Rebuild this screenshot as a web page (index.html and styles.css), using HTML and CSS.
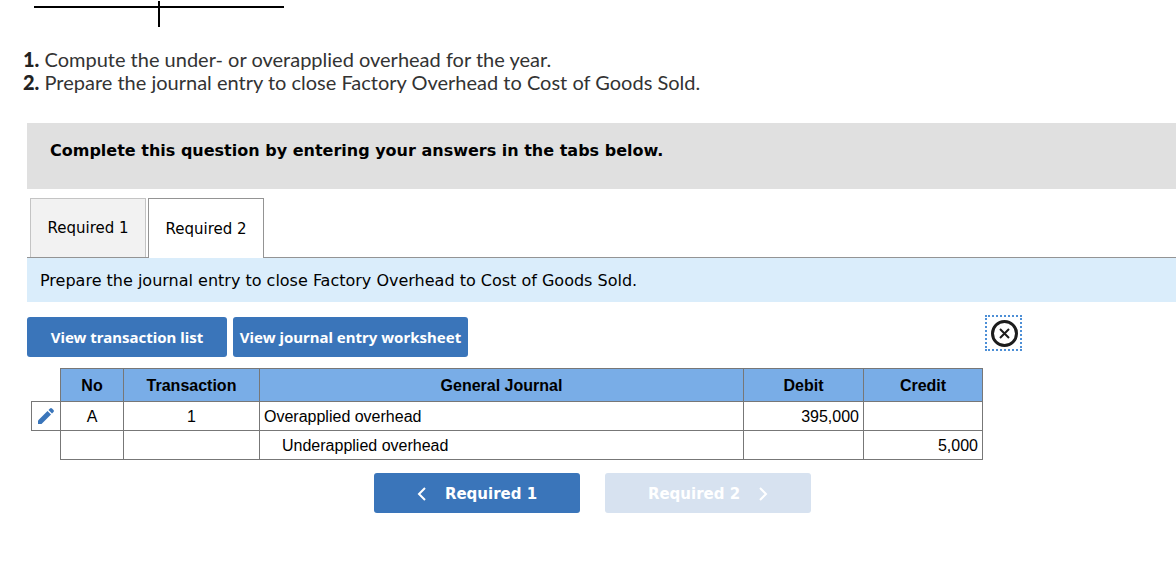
FILE: index.html
```html
<!DOCTYPE html>
<html lang="en">
<head>
  <meta charset="UTF-8">
  <meta name="viewport" content="width=device-width, initial-scale=1.0">
  <title>Factory Overhead</title>
  <link rel="stylesheet" href="styles.css">
</head>
<body>
  <svg class="t-account" width="250" height="26" viewBox="0 0 250 26" aria-hidden="true">
    <path d="M0 6H250M125 0V26" stroke="#000" stroke-width="2"/>
  </svg>

  <div class="question">
    <div><b>1.</b> Compute the under- or overapplied overhead for the year.</div>
    <div><b>2.</b> Prepare the journal entry to close Factory Overhead to Cost of Goods Sold.</div>
  </div>

  <main class="answer">
    <div class="banner">Complete this question by entering your answers in the tabs below.</div>

    <div class="tabs" role="tablist">
      <button class="tab" type="button" role="tab" aria-selected="false">Required 1</button>
      <button class="tab active" type="button" role="tab" aria-selected="true">Required 2</button>
    </div>
    <div class="instruction">Prepare the journal entry to close Factory Overhead to Cost of Goods Sold.</div>

    <div class="toolbar">
      <button class="btn btn-list" type="button">View transaction list</button>
      <button class="btn btn-worksheet" type="button">View journal entry worksheet</button>
      <button class="close" type="button" aria-label="Close">
        <svg width="28" height="28" viewBox="0 0 28 28" fill="none" stroke="#1c1c1c">
          <circle cx="14.500" cy="14.500" r="12" stroke-width="3"/>
          <path d="M10 10l9 9M19 10l-9 9" stroke-width="2"/>
        </svg>
      </button>
    </div>

    <table class="journal">
      <colgroup>
        <col class="col-edit">
        <col class="col-no">
        <col class="col-transaction">
        <col>
        <col class="col-debit">
        <col class="col-credit">
      </colgroup>
      <thead>
        <tr>
          <td class="blank"></td>
          <th>No</th>
          <th>Transaction</th>
          <th>General Journal</th>
          <th>Debit</th>
          <th>Credit</th>
        </tr>
      </thead>
      <tbody>
        <tr>
          <td class="edit-cell">
            <button class="edit" type="button" aria-label="Edit entry">
              <svg width="18" height="18" viewBox="0 0 18 18" fill="#3a75ba">
                <path d="M1 17v-3.500L10.500 4l3.500 3.500L4.500 17z"/>
                <path d="M11.500 3L13 1.500q1-1 2 0L16.500 3q1 1 0 2L15 6.500z"/>
              </svg>
            </button>
          </td>
          <td class="center">A</td>
          <td class="center">1</td>
          <td>Overapplied overhead</td>
          <td class="amount">395,000</td>
          <td class="amount"></td>
        </tr>
        <tr>
          <td class="blank"></td>
          <td></td>
          <td></td>
          <td class="indent">Underapplied overhead</td>
          <td class="amount"></td>
          <td class="amount">5,000</td>
        </tr>
      </tbody>
    </table>

    <div class="pager">
      <button class="btn" type="button">
        <svg width="10" height="14" viewBox="0 0 10 14" fill="none" stroke="currentColor" stroke-width="2"><path d="M8 1L2 7l6 6"/></svg>
        Required 1
      </button>
      <button class="btn" type="button" disabled>
        Required 2
        <svg width="10" height="14" viewBox="0 0 10 14" fill="none" stroke="currentColor" stroke-width="2"><path d="M2 1l6 6-6 6"/></svg>
      </button>
    </div>
  </main>
</body>
</html>
```
FILE: styles.css
```css
* {
  box-sizing: border-box;
}
body {
  margin: 0;
  background: #fff;
  color: #000;
  font-family: "DejaVu Sans", Verdana, sans-serif;
  font-size: 16px;
}
button {
  margin: 0;
  padding: 0;
  font-family: inherit;
  cursor: pointer;
}
svg {
  display: block;
}
.t-account {
  margin: 1px 0 0 34px;
}
.question {
  padding: 21px 23px 29px;
  color: #333;
  font-family: Lato, sans-serif;
  font-size: 20px;
  line-height: 23px;
}
.question b {
  color: #222;
  font-weight: 900;
}
.answer {
  margin-left: 27px;
}
.banner {
  padding: 17px 23px 27px;
  background: #e0e0e0;
  font-weight: 700;
  line-height: 22px;
}

/* tabs */
.tabs {
  display: flex;
  gap: 2px;
  padding: 9px 3px 0;
  border-bottom: 1px solid #949494;
}
.tab {
  width: 116px;
  height: 59px;
  border: 1px solid #c4c4c4;
  border-bottom: 0;
  background: #f2f2f2;
  color: #000;
  font-size: 15px;
}
.tab.active {
  height: 60px;
  margin-bottom: -1px;
  border-color: #949494;
  background: #fff;
}
.instruction {
  padding: 12px 13px 10px;
  background: #daedfb;
  line-height: 22px;
}

/* buttons */
.toolbar {
  display: flex;
  gap: 6px;
  max-width: 995px;
  padding-top: 13px;
}
.btn {
  height: 40px;
  margin-top: 2px;
  border: 0;
  border-radius: 3px;
  background: #3a75ba;
  color: #fff;
  font-family: "Noto Sans", Verdana, sans-serif;
  font-size: 15px;
  font-weight: 700;
}
.btn-list {
  width: 200px;
}
.btn-worksheet {
  width: 235px;
}
.close {
  display: grid;
  place-items: center;
  width: 37px;
  height: 36px;
  margin-left: auto;
  border: 2px dotted #4d8fd6;
  background: #fff;
}

/* journal */
.journal {
  width: calc(100% - 4px);
  max-width: 952px;
  margin: 11px 0 0 4px;
  border-collapse: collapse;
  table-layout: fixed;
  font-family: "Liberation Sans", Arial, sans-serif;
}
.col-edit {
  width: 29px;
}
.col-no {
  width: 63px;
}
.col-transaction {
  width: 136px;
}
.col-debit {
  width: 120px;
}
.col-credit {
  width: 119px;
}
.journal th,
.journal td {
  height: 29px;
  padding: 1px 4px 0;
  border: 1px solid #777;
}
.journal th {
  height: 33px;
  background: #79ade7;
}
.journal .blank {
  border-width: 0;
}
.journal .edit-cell {
  padding: 0;
}
.journal .center {
  text-align: center;
}
.journal .amount {
  text-align: right;
}
.journal .indent {
  padding-left: 22px;
}
.edit {
  display: grid;
  place-items: center;
  width: 100%;
  height: 28px;
  border: 0;
  background: none;
}

/* pager */
.pager {
  display: flex;
  justify-content: center;
  gap: 25px;
  max-width: 1131px;
  padding-top: 11px;
}
.pager .btn {
  display: flex;
  justify-content: center;
  align-items: center;
  gap: 18px;
  width: 206px;
  padding-top: 2px;
  font-family: "DejaVu Sans", Verdana, sans-serif;
}
.pager .btn:disabled {
  background: #d7e2f0;
  cursor: default;
}
```
